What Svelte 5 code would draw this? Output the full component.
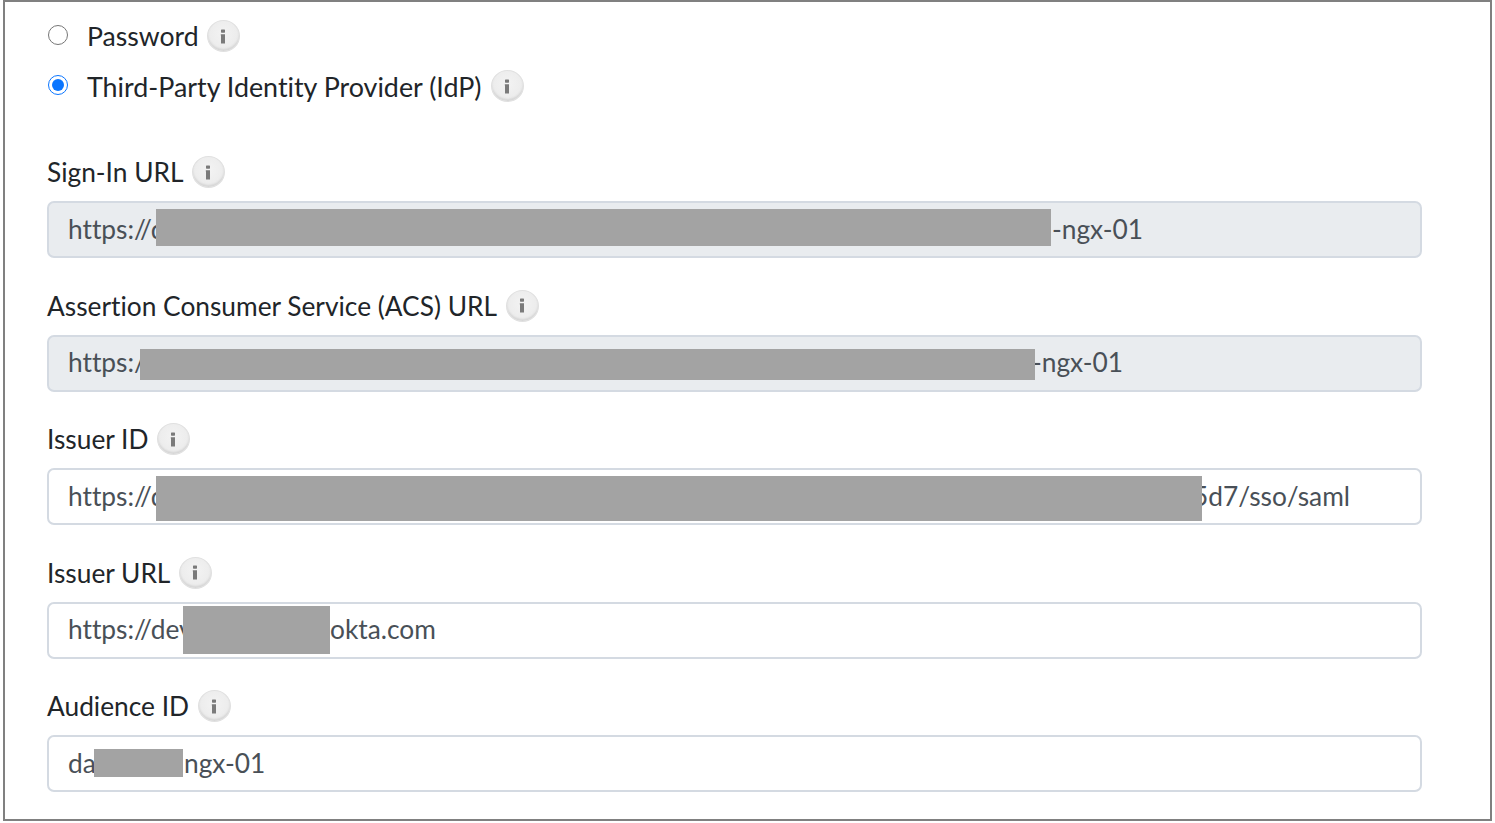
<script>
  const fields = [
    { label: 'Sign-In URL', disabled: true, start: 'https://d', startW: 88, maskW: 895, maskH: 37, maskY: -1, endX: 1, end: '-ngx-01' },
    { label: 'Assertion Consumer Service (ACS) URL', disabled: true, start: 'https://d', startW: 72, maskW: 895, maskH: 31, maskY: 2, endX: -3, end: '-ngx-01' },
    { label: 'Issuer ID', disabled: false, start: 'https://d', startW: 88, maskW: 1046, maskH: 45, maskY: 3, endX: -9, end: '5d7/sso/saml' },
    { label: 'Issuer URL', disabled: false, start: 'https://dev', startW: 115, maskW: 147, maskH: 48, maskY: 1, endX: 0, end: 'okta.com' },
    { label: 'Audience ID', disabled: false, start: 'da', startW: 26, maskW: 89, maskH: 28, maskY: 0, endX: 1, end: 'ngx-01' }
  ];
</script>

{#snippet info()}
  <span class="info" aria-hidden="true">
    <svg class="glyph" viewBox="0 0 6 15"><rect x="1" y="0.5" width="4" height="3.2" rx=".6" fill="#7a7a7a"/><path d="M.8 5.2H5v9.3H1V6.4H.8z" fill="#7a7a7a"/></svg>
  </span>
{/snippet}

<div class="frame">
  <div class="radios">
    <label class="radio">
      <input type="radio" name="auth" />
      <span class="pw">Password</span>
      {@render info()}
    </label>
    <label class="radio">
      <input type="radio" name="auth" checked />
      <span class="wide">Third-Party Identity Provider (IdP)</span>
      {@render info()}
    </label>
  </div>

  <div class="fields">
    {#each fields as f}
      <div class="field">
        <div class="label"><span>{f.label}</span>{@render info()}</div>
        <div class="input" class:disabled={f.disabled}>
          <span class="start" style="width:{f.startW}px">{f.start}</span>
          <span class="mask" style="width:{f.maskW}px;height:{f.maskH}px;top:{f.maskY}px"></span>
          <span class="end" style="margin-left:{f.endX}px">{f.end}</span>
        </div>
      </div>
    {/each}
  </div>
</div>

<style>
  :global(body) {
    margin: 0;
    background: #fff;
  }
  .frame {
    box-sizing: border-box;
    width: 1489px;
    height: 821px;
    margin-left: 3px;
    border: 2px solid #808080;
    padding: 18px 0 0 42px;
    font-family: Lato, "Liberation Sans", sans-serif;
    font-size: 26.3px;
    font-variant-ligatures: none;
    color: #212529;
    background: #fff;
  }
  .radios {
    display: flex;
    flex-direction: column;
    gap: 18px;
  }
  .radio {
    display: flex;
    align-items: center;
    height: 32px;
    font-size: 26.6px;
  }
  .radio .wide {
    font-size: 26.85px;
    margin-right: 9px;
  }
  .radio .pw {
    margin-right: 8px;
  }
  .radio input {
    width: 20px;
    height: 20px;
    margin: -2px 19px 0 1px;
    accent-color: #0a75ff;
  }
  .info {
    flex: none;
    box-sizing: border-box;
    display: flex;
    align-items: center;
    justify-content: center;
    width: 33px;
    height: 32px;
    border-radius: 50%;
    background: radial-gradient(circle at 50% 42%, #f3f3f3 0%, #ececec 65%, #dadada 100%);
    border: 1px solid #e0e0e0;
    box-shadow: inset 0 -2px 2px #d6d6d6;
  }
  .glyph {
    width: 6px;
    height: 15px;
  }
  .fields {
    display: flex;
    flex-direction: column;
    gap: 31.5px;
    margin-top: 54px;
  }
  .field {
    display: flex;
    flex-direction: column;
    width: 1375px;
    gap: 13px;
  }
  .label {
    display: flex;
    align-items: center;
    gap: 8.5px;
    height: 32px;
  }
  .input {
    box-sizing: border-box;
    display: flex;
    align-items: center;
    height: 57px;
    padding: 0 0 2px 19px;
    border: 2px solid #d4dae2;
    border-radius: 7px;
    color: #495057;
    background: #fff;
    white-space: nowrap;
    isolation: isolate;
  }
  .input.disabled {
    background: #e9ecef;
  }
  .start {
    flex: none;
  }
  .mask {
    flex: none;
    position: relative;
    background: #a3a3a3;
  }
  .end {
    position: relative;
    z-index: -1;
  }
</style>
